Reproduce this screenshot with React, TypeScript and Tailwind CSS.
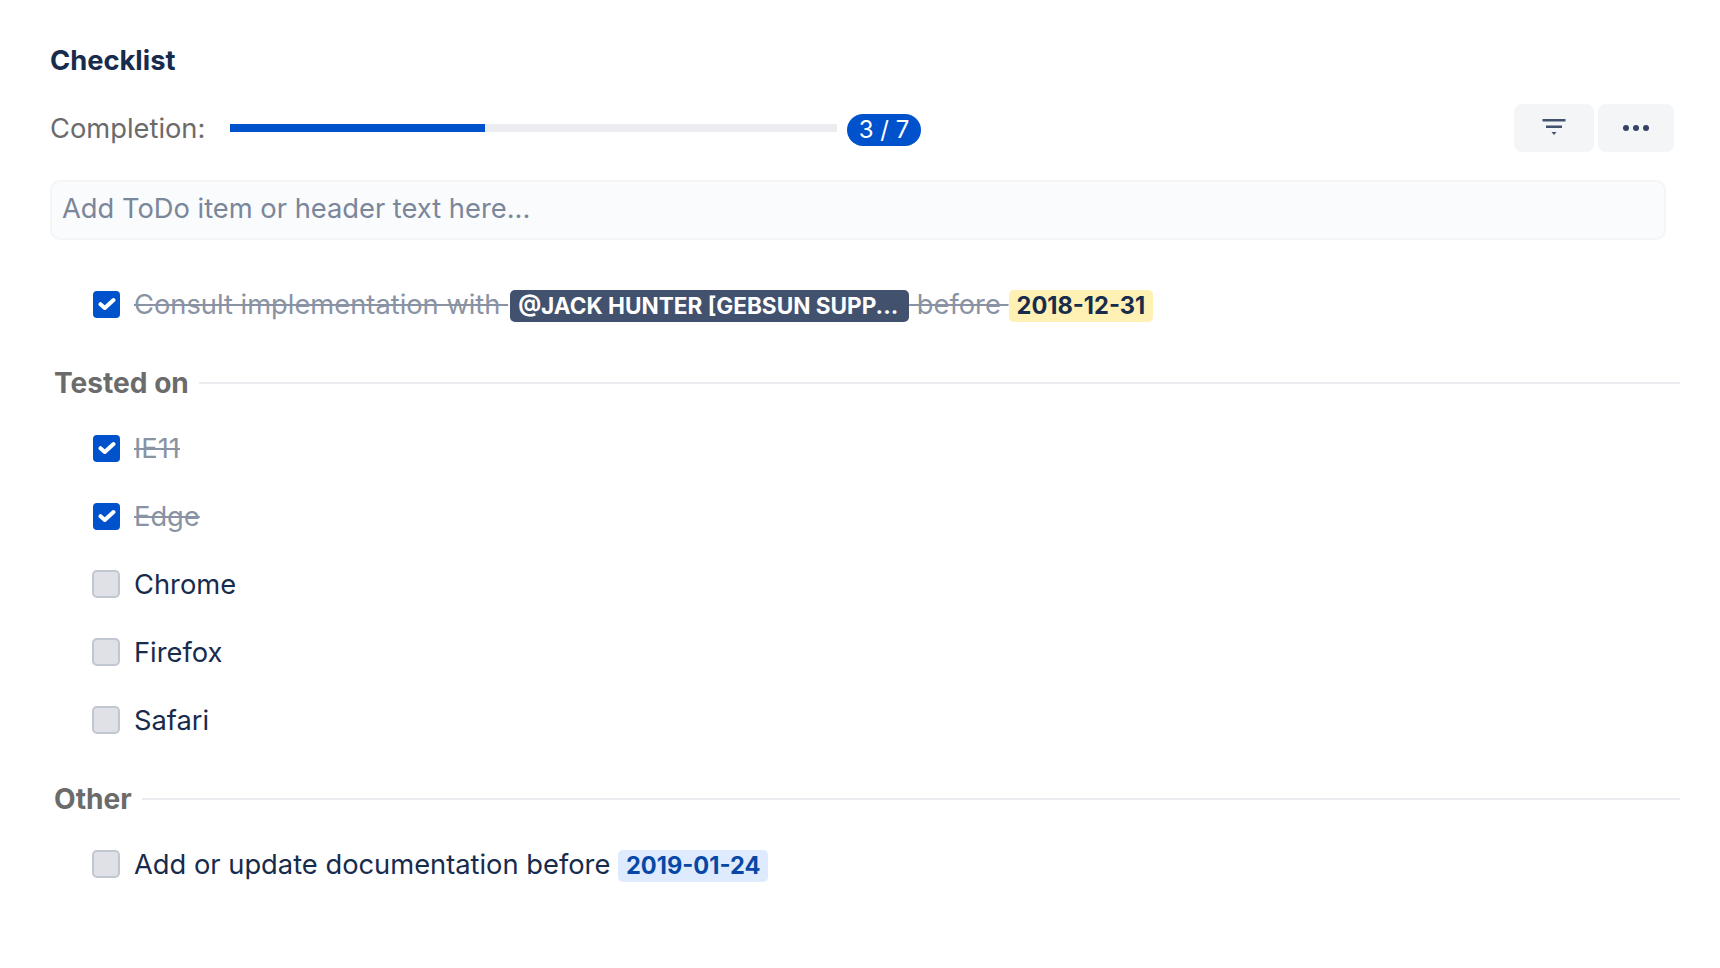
import React from 'react';

const font = "font-['Inter','Noto_Sans',sans-serif]";

function Box({ checked }: { checked?: boolean }) {
  if (checked) {
    return (
      <span className="flex h-[27px] w-[27px] shrink-0 items-center justify-center rounded-[4px] bg-[#0052cc]">
        <svg width="18" height="14" viewBox="0 0 18 14" fill="none">
          <path d="M2.5 7.2 L6.8 11 L15.5 3" stroke="#fff" strokeWidth="4" strokeLinecap="round" strokeLinejoin="round" />
        </svg>
      </span>
    );
  }
  return <span className="-ml-[1px] h-[28px] w-[28px] shrink-0 rounded-[5px] border-2 border-[#c1c7d0] bg-[#dfe1e6]" />;
}

function Row({ checked, children }: { checked?: boolean; children: React.ReactNode }) {
  return (
    <div className="flex h-[68px] items-center pl-[43px]">
      <Box checked={checked} />
      <div className={`ml-[14px] flex items-center whitespace-pre pt-[2px] text-[27.3px] ${checked ? 'text-[#8993a4]' : 'text-[#172b4d]'}`}>{children}</div>
    </div>
  );
}

function Done({ children }: { children: React.ReactNode }) {
  return <span className="line-through decoration-[2px]">{children}</span>;
}

function Section({ title }: { title: string }) {
  return (
    <div className="flex h-[30px] items-center gap-[10px] pl-[4px]">
      <span className="pt-[2px] text-[28.1px] font-bold text-[#6b6b6b]">{title}</span>
      <span className="mt-[2px] h-[2px] flex-1 bg-[#ebecf0]" />
    </div>
  );
}

export default function App() {
  return (
    <div className={`${font} h-[968px] w-[1720px] overflow-hidden bg-white pl-[50px] pr-[40px] pt-[42px]`}>
      <h2 className="h-[36px] text-[27.3px] font-bold leading-[38px] text-[#172b4d]">Checklist</h2>

      <div className="mt-[26px] flex h-[48px] items-center">
        <span className="w-[180px] pt-[2px] text-[27.3px] text-[#6b6b6b]">Completion:</span>
        <div className="h-[8px] w-[607px] bg-[#ebecf0]">
          <div className="h-full w-[42%] bg-[#0052cc]" />
        </div>
        <span className="ml-[10px] mt-[4px] flex h-[32px] w-[74px] items-center justify-center rounded-full bg-[#0052cc] text-[24px] text-white">3 / 7</span>
        <div className="ml-auto mr-[6px] flex gap-[4px]">
          <button className="flex h-[48px] w-[80px] items-center justify-center rounded-[8px] bg-[#f4f5f7]">
            <svg width="24" height="18" viewBox="0 0 24 18" fill="#42526e">
              <rect x="0.5" y="0" width="23" height="2.5" />
              <rect x="4" y="6.5" width="16" height="2.5" />
              <path d="M9.5 13h5l-2.5 3z" />
            </svg>
          </button>
          <button className="flex h-[48px] w-[76px] items-center justify-center gap-[4px] rounded-[8px] bg-[#f4f5f7]">
            <span className="h-[6px] w-[6px] rounded-full bg-[#344563]" />
            <span className="h-[6px] w-[6px] rounded-full bg-[#344563]" />
            <span className="h-[6px] w-[6px] rounded-full bg-[#344563]" />
          </button>
        </div>
      </div>

      <div className="mt-[28px] mr-[14px] flex h-[60px] items-center rounded-[10px] border-2 border-[#f4f5f7] bg-[#fafbfc] pb-[1px] pl-[10px] text-[27.3px] text-[#7a869a]">
        Add ToDo item or header text here...
      </div>

      <div className="mt-[30px]">
        <Row checked>
          <Done>Consult implementation with </Done>
          <span className="ml-[2px] mt-[2px] flex h-[32px] w-[399px] items-center rounded-[5px] bg-[#42526e] pl-[8px] text-[22.6px] font-bold text-white">@JACK HUNTER [GEBSUN SUPP...</span>
          <Done> before </Done>
          <span className="mt-[2px] flex h-[32px] items-center rounded-[5px] bg-[#fff0b3] px-[8px] text-[23.6px] font-bold text-[#172b4d]">2018-12-31</span>
        </Row>
      </div>

      <div className="mt-[29px]">
        <Section title="Tested on" />
      </div>
      <div className="mt-[17px]">
        <Row checked><Done>IE11</Done></Row>
        <Row checked><Done>Edge</Done></Row>
        <Row>Chrome</Row>
        <Row>Firefox</Row>
        <Row>Safari</Row>
      </div>

      <div className="mt-[29px]">
        <Section title="Other" />
      </div>
      <div className="mt-[17px]">
        <Row>
          <span>Add or update documentation before </span>
          <span className="mt-[2px] flex h-[32px] items-center rounded-[5px] bg-[#deebff] px-[8px] text-[23.6px] font-bold text-[#0747a6]">2019-01-24</span>
        </Row>
      </div>
    </div>
  );
}
